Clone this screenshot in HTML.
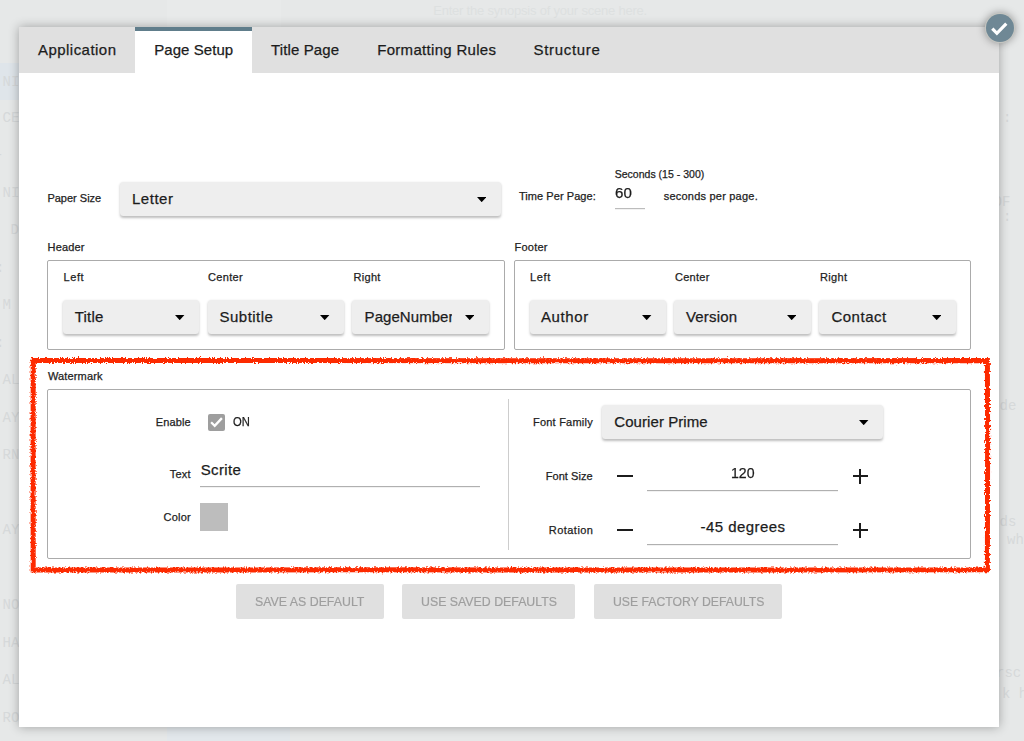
<!DOCTYPE html>
<html>
<head>
<meta charset="utf-8">
<title>Settings - Page Setup</title>
<style>
html,body{margin:0;padding:0;}
body{width:1024px;height:741px;overflow:hidden;position:relative;background:#e6e8e8;font-family:"Liberation Sans",sans-serif;color:#1a1a1a;}
.abs{position:absolute;}
.t{position:absolute;white-space:nowrap;line-height:1;-webkit-text-stroke:0.25px currentColor;}
.bgtxt{position:absolute;white-space:nowrap;font-family:"Liberation Mono",monospace;font-size:14px;color:#d6d9da;line-height:1;}
#dlg{position:absolute;left:19px;top:27px;width:980px;height:700px;background:#fff;box-shadow:0 0 10px rgba(0,0,0,.31);}
#tabbar{position:absolute;left:0;top:0;width:980px;height:46px;background:#e0e0e0;}
#acttab{position:absolute;left:116px;top:0;width:117px;height:46px;background:#fff;border-top:4px solid #607d8b;box-sizing:border-box;}
.tab{font-size:15px;top:42px;color:#1c1c1c;}
.lbl{font-size:11px;color:#222;}
.dd{position:absolute;background:#eeeeee;border-radius:3.5px;box-shadow:0 1.5px 2.5px rgba(0,0,0,.26);height:33.5px;width:136.5px;}
.v{position:absolute;font-size:15px;line-height:1;white-space:nowrap;color:#1c1c1c;-webkit-text-stroke:0.25px currentColor;}
.a{position:absolute;width:9.4px;height:5.2px;margin-right:0.2px;}
.a svg{position:absolute;left:0;top:0;}
.box{position:absolute;border:1px solid #ababab;border-radius:2px;box-sizing:border-box;}
.ul{position:absolute;height:1px;background:#b0b0b0;box-shadow:0 0.5px 0.5px rgba(0,0,0,.10);}
.btn{position:absolute;top:584px;height:35px;background:#e0e0e0;border-radius:2px;}
.btn span{position:absolute;top:10.7px;font-size:13px;-webkit-text-stroke:0.2px currentColor;line-height:1;color:#9e9e9e;white-space:nowrap;}
/*LS-BEGIN*/
#t1{letter-spacing:0.461px}
#t2{letter-spacing:0.066px}
#t3{letter-spacing:0.113px}
#t4{letter-spacing:0.305px}
#t5{letter-spacing:0.668px}
#l_paper{letter-spacing:-0.001px}
#v_letter{letter-spacing:0.548px}
#l_tpp{letter-spacing:0.053px}
#l_secs{letter-spacing:0.017px}
#l_60{transform:scaleX(0.9739);transform-origin:0 0}
#l_spp{letter-spacing:0.218px}
#l_header{letter-spacing:0.144px}
#hl{letter-spacing:0.547px}
#hc{letter-spacing:0.294px}
#hr{letter-spacing:0.303px}
#v_title{letter-spacing:0.230px}
#v_sub{letter-spacing:0.479px}
#v_pn{letter-spacing:0.057px}
#l_footer{letter-spacing:0.201px}
#fl{letter-spacing:0.647px}
#fc{letter-spacing:0.294px}
#fr{letter-spacing:0.378px}
#v_author{letter-spacing:0.619px}
#v_version{letter-spacing:0.159px}
#v_contact{letter-spacing:0.516px}
#l_wm{letter-spacing:0.153px}
#l_enable{letter-spacing:0.107px}
#l_on{transform:scaleX(0.9333);transform-origin:0 0}
#l_text{letter-spacing:0.237px}
#l_scrite{letter-spacing:0.351px}
#l_color{letter-spacing:0.176px}
#l_ff{letter-spacing:0.223px}
#v_cp{letter-spacing:0.072px}
#l_fs{letter-spacing:0.066px}
#l_120{transform:scaleX(0.9428);transform-origin:0 0}
#l_rot{letter-spacing:0.459px}
#l_45{letter-spacing:0.434px}
#bgsyn{letter-spacing:-0.212px}
#b1{transform:scaleX(0.9503);transform-origin:0 0}
#b2{transform:scaleX(0.9492);transform-origin:0 0}
#b3{transform:scaleX(0.9405);transform-origin:0 0}
/*LS-END*/
</style>
</head>
<body>
<!-- faint background editor behind the modal -->
<div class="abs" style="left:167px;top:0;width:114px;height:27px;background:#e8eaea;"></div>
<div class="abs" style="left:167px;top:727px;width:123px;height:14px;background:#e2e7eb;"></div>
<div class="abs" style="left:0;top:63px;width:19px;height:37px;background:#dfe5ea;"></div>
<div class="bgtxt" style="left:2.5px;top:74.5px;">NI</div>
<div class="bgtxt" style="left:2.5px;top:110.5px;">CE</div>
<div class="bgtxt" style="left:-5px;top:147.5px;">-</div>
<div class="bgtxt" style="left:2.5px;top:185.5px;">NI</div>
<div class="bgtxt" style="left:10.5px;top:223px;">D</div>
<div class="bgtxt" style="left:-4px;top:260.5px;">:</div>
<div class="bgtxt" style="left:2.5px;top:298px;">M</div>
<div class="bgtxt" style="left:-4px;top:335.5px;">:</div>
<div class="bgtxt" style="left:2.5px;top:373px;">AL</div>
<div class="bgtxt" style="left:2.5px;top:410.5px;">AY</div>
<div class="bgtxt" style="left:2.5px;top:448px;">RN</div>
<div class="bgtxt" style="left:2.5px;top:523px;">AY</div>
<div class="bgtxt" style="left:2.5px;top:598px;">NO</div>
<div class="bgtxt" style="left:2.5px;top:635.5px;">HA</div>
<div class="bgtxt" style="left:2.5px;top:673px;">AL</div>
<div class="bgtxt" style="left:2.5px;top:710.5px;">RO</div>
<div class="bgtxt" style="left:1003px;top:111px;">:</div>
<div class="bgtxt" style="left:993.5px;top:195px;">OF</div>
<div class="bgtxt" style="left:1003px;top:210px;">:</div>
<div class="bgtxt" style="left:999.5px;top:398.6px;">de</div>
<div class="bgtxt" style="left:999.5px;top:514.5px;">ds</div>
<div class="bgtxt" style="left:1007px;top:533px;">wh</div>
<div class="bgtxt" style="left:996px;top:666.3px;">rsc</div>
<div class="bgtxt" style="left:1002px;top:687.3px;">k h</div>
<div class="t" id="bgsyn" style="left:433.2px;top:3.7px;font-size:13px;color:#dde0e0;-webkit-text-stroke:0;">Enter the synopsis of your scene here.</div>

<div id="dlg">
  <div id="tabbar"></div>
  <div id="acttab"></div>
</div>

<!-- tabs -->
<div class="t tab" id="t1" style="left:38px;">Application</div>
<div class="t tab" id="t2" style="left:154.2px;">Page Setup</div>
<div class="t tab" id="t3" style="left:271px;">Title Page</div>
<div class="t tab" id="t4" style="left:377.2px;">Formatting Rules</div>
<div class="t tab" id="t5" style="left:533.6px;">Structure</div>

<!-- close (check) button -->
<div class="abs" id="okbtn" style="left:986px;top:14px;width:28px;height:28px;border-radius:50%;background:#6f8895;box-shadow:0 0 0 1.2px rgba(196,197,193,.95),0 0 8px 1px rgba(0,0,0,.38);">
  <svg width="28" height="28" viewBox="0 0 28 28" style="position:absolute;left:0;top:0;"><path d="M6.3 14.6 L10.9 19.3 L20.3 9.6" fill="none" stroke="#fff" stroke-width="3.2" stroke-linecap="butt" stroke-linejoin="miter"/></svg>
</div>

<!-- row: paper size / time per page -->
<div class="t lbl" id="l_paper" style="left:47.4px;top:193.4px;">Paper Size</div>
<div class="dd" style="left:119.5px;top:182px;width:381px;height:34px;"><span class="v" id="v_letter" style="left:12.4px;top:9px;">Letter</span><span class="a" style="right:14.3px;top:14.5px;"><svg width="9.4" height="5.2" viewBox="0 0 9.4 5.2"><path d="M0 0 H9.4 L4.7 5.2 Z" fill="#000"/></svg></span></div>
<div class="t lbl" id="l_tpp" style="left:519px;top:191.3px;">Time Per Page:</div>
<div class="t" id="l_secs" style="left:614.7px;top:168.9px;font-size:10.5px;color:#222;">Seconds (15 - 300)</div>
<div class="t" id="l_60" style="left:615px;top:185.4px;font-size:15.5px;color:#1c1c1c;">60</div>
<div class="ul" style="left:614.5px;top:208px;width:30px;background:#bcbcbc;"></div>
<div class="t lbl" id="l_spp" style="left:663.7px;top:191.3px;">seconds per page.</div>

<!-- header group -->
<div class="t lbl" id="l_header" style="left:47.6px;top:242.4px;">Header</div>
<div class="box" style="left:47px;top:260px;width:458px;height:90px;"></div>
<div class="t lbl" id="hl" style="left:63.6px;top:272.4px;">Left</div>
<div class="t lbl" id="hc" style="left:208.1px;top:272.4px;">Center</div>
<div class="t lbl" id="hr" style="left:353.5px;top:272.4px;">Right</div>
<div class="dd" style="left:62.7px;top:300px;"><span class="v" id="v_title" style="left:12px;top:9.1px;">Title</span><span class="a" style="right:14.3px;top:15px;"><svg width="9.4" height="5.2" viewBox="0 0 9.4 5.2"><path d="M0 0 H9.4 L4.7 5.2 Z" fill="#000"/></svg></span></div>
<div class="dd" style="left:207.5px;top:300px;"><span class="v" id="v_sub" style="left:12px;top:9.1px;">Subtitle</span><span class="a" style="right:14.3px;top:15px;"><svg width="9.4" height="5.2" viewBox="0 0 9.4 5.2"><path d="M0 0 H9.4 L4.7 5.2 Z" fill="#000"/></svg></span></div>
<div class="dd" style="left:352.3px;top:300px;"><span class="v" id="v_pn" style="left:12.3px;top:9.1px;width:87.4px;overflow:hidden;padding-bottom:5px;">PageNumber</span><span class="a" style="right:14.3px;top:15px;"><svg width="9.4" height="5.2" viewBox="0 0 9.4 5.2"><path d="M0 0 H9.4 L4.7 5.2 Z" fill="#000"/></svg></span></div>

<!-- footer group -->
<div class="t lbl" id="l_footer" style="left:514.6px;top:242.4px;">Footer</div>
<div class="box" style="left:514px;top:260px;width:457px;height:90px;"></div>
<div class="t lbl" id="fl" style="left:530.1px;top:272.4px;">Left</div>
<div class="t lbl" id="fc" style="left:674.9px;top:272.4px;">Center</div>
<div class="t lbl" id="fr" style="left:819.9px;top:272.4px;">Right</div>
<div class="dd" style="left:529.5px;top:300px;"><span class="v" id="v_author" style="left:11.5px;top:9.1px;">Author</span><span class="a" style="right:14.3px;top:15px;"><svg width="9.4" height="5.2" viewBox="0 0 9.4 5.2"><path d="M0 0 H9.4 L4.7 5.2 Z" fill="#000"/></svg></span></div>
<div class="dd" style="left:674.3px;top:300px;"><span class="v" id="v_version" style="left:11.7px;top:9.1px;">Version</span><span class="a" style="right:14.3px;top:15px;"><svg width="9.4" height="5.2" viewBox="0 0 9.4 5.2"><path d="M0 0 H9.4 L4.7 5.2 Z" fill="#000"/></svg></span></div>
<div class="dd" style="left:819px;top:300px;"><span class="v" id="v_contact" style="left:12.4px;top:9.1px;">Contact</span><span class="a" style="right:14.3px;top:15px;"><svg width="9.4" height="5.2" viewBox="0 0 9.4 5.2"><path d="M0 0 H9.4 L4.7 5.2 Z" fill="#000"/></svg></span></div>

<!-- watermark group -->
<div class="t lbl" id="l_wm" style="left:47.9px;top:371.3px;">Watermark</div>
<div class="box" style="left:47px;top:389px;width:924px;height:170px;"></div>
<div class="abs" style="left:508px;top:399px;width:1px;height:151px;background:#cdcdcd;"></div>

<div class="t lbl" id="l_enable" style="left:155.8px;top:416.5px;">Enable</div>
<div class="abs" id="chk" style="left:207.5px;top:414px;width:17px;height:17px;border-radius:2px;background:#9e9e9e;">
  <svg width="17" height="17" viewBox="0 0 17 17" style="position:absolute;left:0;top:0;"><path d="M3.1 8.3 L6.7 11.8 L13.9 4.1" fill="none" stroke="#fff" stroke-width="2.3"/></svg>
</div>
<div class="t" id="l_on" style="left:232.7px;top:416.3px;font-size:12px;color:#1c1c1c;">ON</div>

<div class="t lbl" id="l_text" style="left:169.7px;top:469.1px;">Text</div>
<div class="t" id="l_scrite" style="left:200.7px;top:461.9px;font-size:15px;color:#1c1c1c;">Scrite</div>
<div class="ul" style="left:200px;top:486px;width:280px;"></div>

<div class="t lbl" id="l_color" style="left:163.6px;top:512.1px;">Color</div>
<div class="abs" style="left:200px;top:503px;width:28px;height:28px;background:#bdbdbd;"></div>

<div class="t lbl" id="l_ff" style="left:533px;top:417.4px;">Font Family</div>
<div class="dd" style="left:602px;top:405px;width:281px;height:34px;"><span class="v" id="v_cp" style="left:12.3px;top:8.8px;">Courier Prime</span><span class="a" style="right:14.3px;top:15px;"><svg width="9.4" height="5.2" viewBox="0 0 9.4 5.2"><path d="M0 0 H9.4 L4.7 5.2 Z" fill="#000"/></svg></span></div>

<div class="t lbl" id="l_fs" style="left:545.7px;top:470.5px;">Font Size</div>
<div class="abs" style="left:617.3px;top:475.3px;width:15.4px;height:1.9px;background:#1c1c1c;"></div>
<div class="t" id="l_120" style="left:730.5px;top:464.6px;font-size:15px;color:#1c1c1c;">120</div>
<div class="ul" style="left:647.3px;top:490px;width:190.5px;"></div>
<div class="abs" style="left:852.5px;top:475.4px;width:15.4px;height:1.9px;background:#1c1c1c;"></div>
<div class="abs" style="left:859.25px;top:468.7px;width:1.9px;height:15.4px;background:#1c1c1c;"></div>

<div class="t lbl" id="l_rot" style="left:548.8px;top:524.7px;">Rotation</div>
<div class="abs" style="left:617.3px;top:529.3px;width:15.4px;height:1.9px;background:#1c1c1c;"></div>
<div class="t" id="l_45" style="left:700.6px;top:518.7px;font-size:15px;color:#1c1c1c;">-45 degrees</div>
<div class="ul" style="left:647.3px;top:544px;width:190.5px;"></div>
<div class="abs" style="left:852.5px;top:529.4px;width:15.4px;height:1.9px;background:#1c1c1c;"></div>
<div class="abs" style="left:859.25px;top:522.7px;width:1.9px;height:15.4px;background:#1c1c1c;"></div>

<!-- buttons -->
<div class="btn" style="left:236.4px;width:147.8px;"><span id="b1" style="left:18.6px;">SAVE AS DEFAULT</span></div>
<div class="btn" style="left:402.4px;width:172.6px;"><span id="b2" style="left:18.6px;">USE SAVED DEFAULTS</span></div>
<div class="btn" style="left:594px;width:188.3px;"><span id="b3" style="left:18.7px;">USE FACTORY DEFAULTS</span></div>

<!-- hand drawn red annotation rectangle -->
<svg class="abs" id="redbox" style="left:0;top:0;" width="1024" height="741" viewBox="0 0 1024 741">
  <defs>
    <filter id="rough" x="-5%" y="-5%" width="110%" height="110%">
      <feTurbulence type="fractalNoise" baseFrequency="0.55" numOctaves="3" seed="7" result="n"/>
      <feDisplacementMap in="SourceGraphic" in2="n" scale="4.2" xChannelSelector="R" yChannelSelector="G"/>
    </filter>
  </defs>
  <path d="M33.2 360.6 L300 360.4 L640 360.8 L987.4 360.4 L987.6 440 L987.4 569.8 L700 570.1 L350 569.8 L33.2 570.1 L33.1 470 Z" fill="none" stroke="#fd2a03" stroke-width="5" stroke-linejoin="miter" filter="url(#rough)"/>
</svg>

</body>
</html>
